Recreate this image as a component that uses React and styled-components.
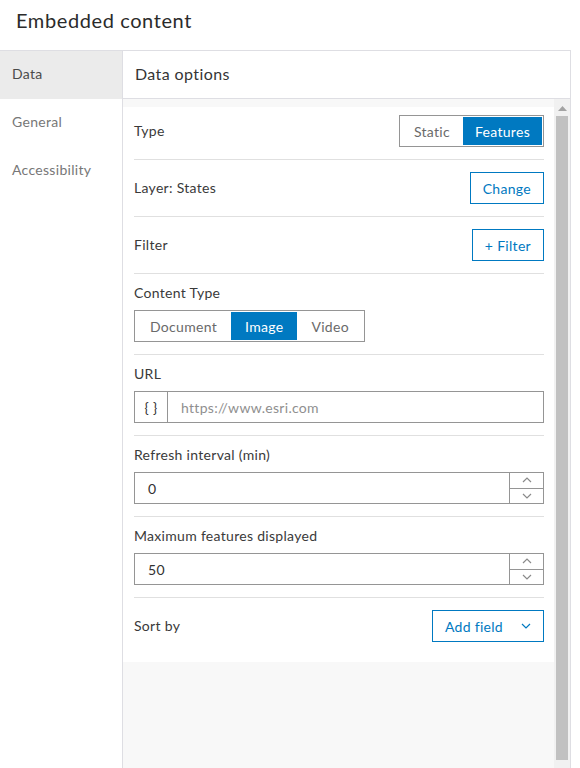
import React from "react";
import styled, { createGlobalStyle } from "styled-components";

const Global = createGlobalStyle`
  html, body { margin: 0; padding: 0; background: #fff; }
  body { font-family: Lato, "Open Sans", sans-serif; color: #323232; letter-spacing: 0.3px; }
  * { box-sizing: border-box; }
`;

const Page = styled.div`
  width: 580px;
  height: 768px;
  display: flex;
  flex-direction: column;
  overflow: hidden;
`;

const Title = styled.h1`
  margin: 0;
  height: 50px;
  padding: 8px 16px 0;
  font-size: 20px;
  line-height: 24px;
  font-weight: 400;
  letter-spacing: 0.6px;
  color: #2b2b2b;
`;

const Main = styled.div`
  flex: 1;
  width: 571px;
  display: flex;
  border-top: 1px solid #dedee3;
  border-right: 1px solid #dedee3;
  min-height: 0;
`;

const Sidebar = styled.nav`
  width: 123px;
  border-right: 1px solid #dedee3;
  display: flex;
  flex-direction: column;
`;

const NavItem = styled.div`
  height: 48px;
  display: flex;
  align-items: center;
  padding: 0 0 3px 12px;
  font-size: 14px;
  color: ${(p) => (p.$active ? "#4a4a4a" : "#777")};
  background: ${(p) => (p.$active ? "#ebebeb" : "transparent")};
`;

const Panel = styled.section`
  flex: 1;
  display: flex;
  flex-direction: column;
  min-width: 0;
`;

const PanelHeader = styled.div`
  height: 48px;
  flex: none;
  display: flex;
  align-items: center;
  padding: 0 0 2px 12px;
  font-size: 16px;
  letter-spacing: 0.4px;
  color: #353535;
  border-bottom: 1px solid #dedee3;
`;

const ScrollArea = styled.div`
  flex: 1;
  display: flex;
  background: #f8f8f8;
  min-height: 0;
`;

const Content = styled.div`
  flex: 1;
  padding-top: 8px;
`;

const Card = styled.div`
  background: #fff;
  padding: 0 10px 8px 11px;
`;

const Row = styled.div`
  display: flex;
  align-items: center;
  justify-content: space-between;
  padding: ${(p) => (p.$first ? "8px" : "12px")} 0 12px;
  border-bottom: ${(p) => (p.$last ? "none" : "1px solid #e0e0e0")};
`;

const Field = styled.div`
  display: flex;
  flex-direction: column;
  align-items: flex-start;
  gap: 10px;
  padding: 12px 0;
  border-bottom: 1px solid #e0e0e0;
`;

const Label = styled.span`
  font-size: 14px;
  line-height: 20px;
  color: #3a3a3a;
`;

const FieldLabel = styled(Label)`
  line-height: 14px;
`;

const Segmented = styled.div`
  display: inline-flex;
  border: 1px solid #959595;
  padding: 1px;
  height: 32px;
`;

const Segment = styled.div`
  height: 28px;
  display: flex;
  align-items: center;
  padding: 0 ${(p) => p.$pad || 14}px;
  font-size: 14px;
  color: ${(p) => (p.$selected ? "#fff" : "#6a6a6a")};
  background: ${(p) => (p.$selected ? "#0079c1" : "transparent")};
`;

const OutlineButton = styled.div`
  height: 32px;
  display: inline-flex;
  align-items: center;
  gap: ${(p) => p.$gap || 0}px;
  padding: 0 12px;
  border: 1px solid #0079c1;
  color: #0079c1;
  font-size: 14px;
  background: #fff;
`;

const InputBox = styled.div`
  width: 100%;
  height: 32px;
  display: flex;
  border: 1px solid #959595;
  background: #fff;
`;

const Prefix = styled.div`
  width: 33px;
  flex: none;
  display: flex;
  align-items: center;
  justify-content: center;
  border-right: 1px solid #959595;
  font-size: 14px;
  color: #323232;
`;

const InputText = styled.div`
  flex: 1;
  display: flex;
  align-items: center;
  padding-left: ${(p) => p.$pad || 13}px;
  font-size: 14px;
  color: ${(p) => (p.$placeholder ? "#8f8f8f" : "#323232")};
`;

const Spinner = styled.div`
  width: 34px;
  flex: none;
  display: flex;
  flex-direction: column;
  border-left: 1px solid #959595;
`;

const SpinBtn = styled.div`
  flex: 1;
  display: flex;
  align-items: center;
  justify-content: center;
  border-top: ${(p) => (p.$bottom ? "1px solid #959595" : "none")};
`;

const Scrollbar = styled.div`
  width: 16px;
  flex: none;
  display: flex;
  flex-direction: column;
  align-items: center;
  background: #f1f1f1;
`;

const ScrollArrow = styled.div`
  height: 17px;
  display: flex;
  align-items: center;
  justify-content: center;
  padding-top: 2px;
`;

const Thumb = styled.div`
  width: 12px;
  flex: 1;
  margin-bottom: 8px;
  background: #c1c1c1;
`;

const Chevron = ({ up, color = "#8a8a8a", w = 10, h = 6 }) => (
  <svg width={w} height={h} viewBox="0 0 10 6" fill="none">
    <polyline
      points={up ? "1,5 5,1 9,5" : "1,1 5,5 9,1"}
      stroke={color}
      strokeWidth="1.2"
    />
  </svg>
);

const NumberInput = ({ value }) => (
  <InputBox>
    <InputText>{value}</InputText>
    <Spinner>
      <SpinBtn>
        <Chevron up />
      </SpinBtn>
      <SpinBtn $bottom>
        <Chevron />
      </SpinBtn>
    </Spinner>
  </InputBox>
);

export default function App() {
  return (
    <Page>
      <Global />
      <Title>Embedded content</Title>
      <Main>
        <Sidebar>
          <NavItem $active>Data</NavItem>
          <NavItem>General</NavItem>
          <NavItem>Accessibility</NavItem>
        </Sidebar>
        <Panel>
          <PanelHeader>Data options</PanelHeader>
          <ScrollArea>
            <Content>
              <Card>
                <Row $first>
                  <Label>Type</Label>
                  <Segmented>
                    <Segment $pad={13}>Static</Segment>
                    <Segment $pad={12} $selected>Features</Segment>
                  </Segmented>
                </Row>
                <Row>
                  <Label>Layer: States</Label>
                  <OutlineButton>Change</OutlineButton>
                </Row>
                <Row>
                  <Label>Filter</Label>
                  <OutlineButton>+ Filter</OutlineButton>
                </Row>
                <Field>
                  <FieldLabel>Content Type</FieldLabel>
                  <Segmented>
                    <Segment>Document</Segment>
                    <Segment $selected>Image</Segment>
                    <Segment>Video</Segment>
                  </Segmented>
                </Field>
                <Field>
                  <FieldLabel>URL</FieldLabel>
                  <InputBox>
                    <Prefix>{"{ }"}</Prefix>
                    <InputText $placeholder>https://www.esri.com</InputText>
                  </InputBox>
                </Field>
                <Field>
                  <FieldLabel>Refresh interval (min)</FieldLabel>
                  <NumberInput value="0" />
                </Field>
                <Field>
                  <FieldLabel>Maximum features displayed</FieldLabel>
                  <NumberInput value="50" />
                </Field>
                <Row $last>
                  <Label>Sort by</Label>
                  <OutlineButton $gap={18}>
                    Add field
                    <Chevron color="#0079c1" w={10} h={6} />
                  </OutlineButton>
                </Row>
              </Card>
            </Content>
            <Scrollbar>
              <ScrollArrow>
                <svg width="9" height="5" viewBox="0 0 9 5">
                  <polygon points="0,5 4.5,0 9,5" fill="#a3a3a3" />
                </svg>
              </ScrollArrow>
              <Thumb />
            </Scrollbar>
          </ScrollArea>
        </Panel>
      </Main>
    </Page>
  );
}
